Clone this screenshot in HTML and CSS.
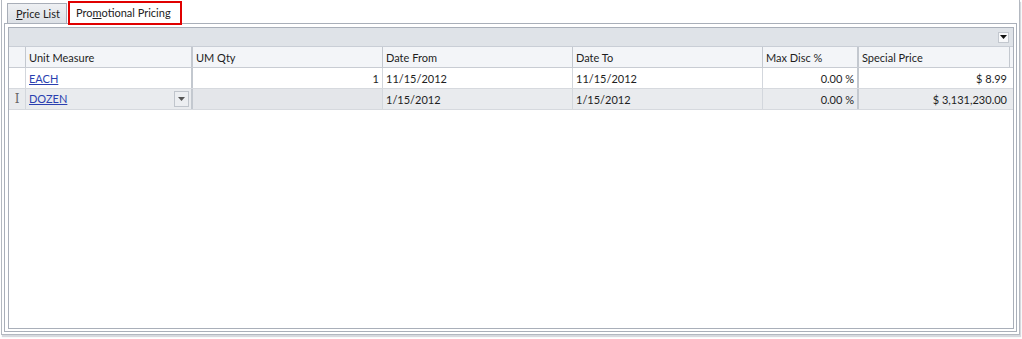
FILE: index.html
```html
<!DOCTYPE html>
<html>
<head>
<meta charset="utf-8">
<link rel="stylesheet" href="styles.css">
</head>
<body>
<div class="ctl">
  <div class="strip">
    <div class="tab"><span class="u">P</span>rice List</div>
    <div class="tab active">Pro<span class="u">m</span>otional Pricing</div>
  </div>
  <div class="page">
    <div class="grid">
      <div class="bar"><span class="menu-btn"><svg width="7" height="4" viewBox="0 0 7 4"><path d="M0 0h7L3.5 4z" fill="#111"/></svg></span></div>
      <div class="row head">
        <div class="c ind"></div>
        <div class="c um thick">Unit Measure</div>
        <div class="c qty">UM Qty</div>
        <div class="c df">Date From</div>
        <div class="c dt">Date To</div>
        <div class="c md thick">Max Disc %</div>
        <div class="c sp">Special Price</div>
      </div>
      <div class="row">
        <div class="c ind"></div>
        <div class="c um thick"><a>EACH</a></div>
        <div class="c qty r">1</div>
        <div class="c df">11/15/2012</div>
        <div class="c dt">11/15/2012</div>
        <div class="c md thick r">0.00 %</div>
        <div class="c sp r">$ 8.99</div>
      </div>
      <div class="row alt">
        <div class="c ind"><span class="ibeam">I</span></div>
        <div class="c um thick edit"><a>DOZEN</a><span class="dd"><svg width="7" height="4" viewBox="0 0 7 4"><path d="M0 0h7L3.5 4z" fill="#555"/></svg></span></div>
        <div class="c qty r"></div>
        <div class="c df">1/15/2012</div>
        <div class="c dt">1/15/2012</div>
        <div class="c md thick r">0.00 %</div>
        <div class="c sp r">$ 3,131,230.00</div>
      </div>
    </div>
  </div>
</div>
</body>
</html>
```
FILE: styles.css
```css
html, body { margin: 0; padding: 0; background: #fff; }
body { font-family: Lato, "Liberation Sans", sans-serif; font-size: 11px; color: #1e1e1e; width: 1022px; height: 339px; overflow: hidden; padding-left: 1px; box-sizing: border-box; }
.ctl { width: 1019px; box-sizing: border-box; border: 1px solid #b3b8c0; border-top: none; padding: 0 2px 2px 2px; box-shadow: 1px 2px 1px #d6d9de; }
.strip { display: flex; align-items: flex-end; height: 23px; padding-left: 3px; position: relative; z-index: 2; }
.tab { height: 19px; line-height: 19px; padding: 0 6px 0 8px; border: 1px solid #a8aeb8; border-bottom: none; background: linear-gradient(#eef0f3, #dde1e6); color: #222; }
.tab.active { height: 20px; line-height: 20px; background: #fff; border: 2px solid #e00000; padding: 0 9px 0 6px; margin-left: 1px; position: relative; top: 2px; }
.u { text-decoration: underline; text-underline-offset: 1px; }
.page { border: 1px solid #a9afb9; padding: 3px 2px 2px 3px; height: 309px; box-sizing: border-box; }
.grid { border: 1px solid #a9afb9; height: 302px; box-sizing: border-box; background: #fff; }
.bar { height: 19px; background: #dfe3e8; border-bottom: 1px solid #c9ced6; display: flex; justify-content: flex-end; align-items: center; padding-right: 4px; box-sizing: border-box; }
.menu-btn { width: 11px; height: 11px; background: #f7f8fa; border: 1px solid #c3c8cf; display: flex; align-items: center; justify-content: center; box-sizing: border-box; }
.row { display: flex; height: 21px; border-bottom: 1px solid #d6d9de; box-sizing: border-box; }
.row.head { background: #f3f5f8; border-bottom: 1px solid #c8ccd3; }
.row.alt { background: #e9ebee; }
.c { box-sizing: border-box; border-right: 1px solid #d3d7dd; padding: 1px 3px 0 3px; line-height: 20px; white-space: nowrap; }
.head .c { border-right-color: #c3c8cf; }
.c.thick { border-right: 2px solid #c3c8cf; }
.r { text-align: right; }
.ind { width: 17px; padding: 0; text-align: center; }
.um { width: 167px; position: relative; }
.qty { width: 190px; }
.df { width: 190px; }
.dt { width: 190px; }
.md { width: 96px; }
.sp { width: 151px; }
.head .sp { border-right: 1px solid #c3c8cf; }
.row:not(.head) .sp { border-right: none; }
a { color: #2a3fb0; text-decoration: underline; }
.alt .um.edit { display: flex; align-items: center; justify-content: space-between; padding: 0 2px 0 3px; }
.dd { width: 15px; height: 16px; background: #eceef1; border: 1px solid #c0c5cc; box-sizing: border-box; display: flex; align-items: center; justify-content: center; }
.alt .qty { background: #e4e6ea; }
.ibeam { font-family: "DejaVu Serif", serif; font-size: 12px; color: #666; }
```
